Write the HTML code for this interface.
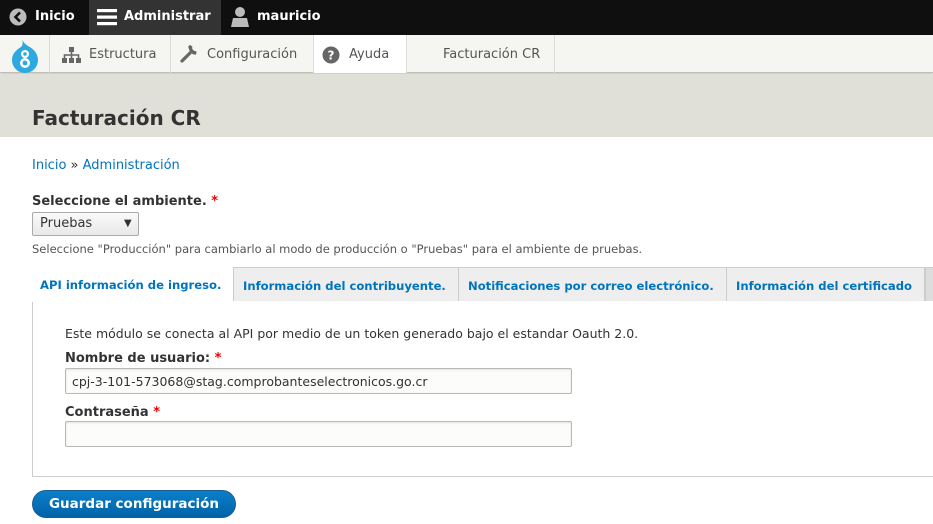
<!DOCTYPE html>
<html><head><meta charset="utf-8"><style>
*{box-sizing:border-box;margin:0;padding:0}
body{width:933px;height:524px;overflow:hidden;background:#fff;font-family:"DejaVu Sans","Liberation Sans",sans-serif;color:#333;position:relative;font-size:12px}
.a{position:absolute;white-space:nowrap}
.top{left:0;top:0;width:933px;height:35px;background:#0f0f0f}
.tw{color:#fff;font-weight:bold;font-size:13px;top:9px}
.bar{left:0;top:35px;width:933px;height:38px;background:#f5f5f2;border-bottom:1px solid #bfbfba;box-shadow:0 2px 2px rgba(0,0,0,.2)}
.sep{top:35px;width:1px;height:38px;background:#dcdcd8}
.bt{top:47px;font-size:13px;color:#555}
.blue{color:#0074bd}
.tab{top:267px;height:34px;background:#eee;border-left:1px solid #ccc;border-top:1px solid #ccc;font-weight:bold;color:#0074bd;font-size:11.6px;padding:11px 0 0 9px;overflow:hidden}
.inp{border:1px solid #b8b8b8;border-radius:2px;background:#fcfcfa;box-shadow:inset 0 1px 2px rgba(0,0,0,.1)}
</style></head><body>
<div class="a top"></div>
<div class="a" style="left:89px;top:0;width:132px;height:35px;background:#333"></div>
<svg class="a" style="left:9px;top:8px" width="18" height="18"><circle cx="9" cy="9" r="8.5" fill="#bbb"/><path d="M11 4.5 6.5 9 11 13.5" stroke="#0f0f0f" stroke-width="2.6" fill="none"/></svg>
<div class="a tw" style="left:35px">Inicio</div>
<svg class="a" style="left:97px;top:8px" width="20" height="18"><rect y="1" width="20" height="3.2" fill="#fff"/><rect y="7.5" width="20" height="3.2" fill="#fff"/><rect y="14" width="20" height="3.2" fill="#fff"/></svg>
<div class="a tw" style="left:124px">Administrar</div>
<svg class="a" style="left:229px;top:5px" width="22" height="24"><circle cx="11" cy="7" r="5" fill="#bbb"/><path d="M4 13h14l2 9H2z" fill="#bbb"/></svg>
<div class="a tw" style="left:257px">mauricio</div>
<div class="a bar"></div>
<div class="a" style="left:314px;top:35px;width:92px;height:38px;background:#fff"></div>
<div class="a sep" style="left:49px"></div><div class="a sep" style="left:170px"></div><div class="a sep" style="left:313px"></div><div class="a sep" style="left:406px"></div><div class="a sep" style="left:554px"></div>
<svg class="a" style="left:8px;top:37px" width="34" height="36"><path d="M14 2c1 3 3 5 6 7 6 3 10 8 10 14a13 13 0 0 1-26 0c0-6 4-10 9-13 2-2 2-5 1-8z" fill="#2ba9e0"/><circle cx="17" cy="17" r="4" fill="#fff"/><circle cx="17" cy="26" r="5" fill="#fff"/><circle cx="17" cy="17" r="1.8" fill="#2ba9e0"/><circle cx="17" cy="26" r="2.4" fill="#2ba9e0"/></svg>
<svg class="a" style="left:61px;top:46px" width="20" height="18"><rect x="8" y="1" width="5" height="5" fill="#666"/><rect x="1" y="12" width="5" height="5" fill="#666"/><rect x="8" y="12" width="5" height="5" fill="#666"/><rect x="15" y="12" width="5" height="5" fill="#666"/><path d="M10.5 6v6M3.5 12V9h14v3" stroke="#666" stroke-width="1.6" fill="none"/></svg>
<div class="a bt" style="left:89px">Estructura</div>
<svg class="a" style="left:179px;top:44px" width="20" height="20"><path d="M3 17 11 9M12 2a5 5 0 0 0 5 7l-3-1-2-2-1-3z" stroke="#666" stroke-width="3.2" fill="#666" stroke-linecap="round"/></svg>
<div class="a bt" style="left:207px">Configuración</div>
<svg class="a" style="left:322px;top:46px" width="18" height="18"><circle cx="9" cy="9" r="8.5" fill="#666"/><text x="9" y="13.5" font-size="12" font-weight="bold" fill="#fff" text-anchor="middle" font-family="DejaVu Sans">?</text></svg>
<div class="a bt" style="left:349px">Ayuda</div>
<div class="a bt" style="left:443px">Facturación CR</div>
<div class="a" style="left:0;top:74px;width:933px;height:63px;background:#e0e0d8"></div>
<div class="a" style="left:32px;top:106px;font-size:20px;font-weight:bold;color:#333">Facturación CR</div>
<div class="a" style="left:32px;top:158px;font-size:13px"><span class="blue">Inicio</span> » <span class="blue">Administración</span></div>
<div class="a" style="left:32px;top:194px;font-size:13px;font-weight:bold">Seleccione el ambiente. <span style="color:#e00">*</span></div>
<div class="a" style="left:32px;top:212px;width:107px;height:24px;border:1px solid #aaa;border-radius:2px;background:linear-gradient(#fafafa,#e8e8e8);font-size:13px;padding:3px 0 0 7px">Pruebas<span style="position:absolute;left:91px;top:5px;font-size:10px">▼</span></div>
<div class="a" style="left:32px;top:242px;font-size:11.5px;color:#555">Seleccione "Producción" para cambiarlo al modo de producción o "Pruebas" para el ambiente de pruebas.</div>
<div class="a" style="left:32px;top:267px;width:910px;height:210px;border:1px solid #ccc"></div>
<div class="a tab" style="left:233px;width:225px">Información del contribuyente.</div>
<div class="a tab" style="left:458px;width:268px">Notificaciones por correo electrónico.</div>
<div class="a tab" style="left:726px;width:199px;border-right:1px solid #ccc">Información del certificado</div>
<div class="a tab" style="left:925px;width:20px;background:#ddd"></div>
<div class="a tab" style="left:32px;width:201px;background:#fff;border-left:0;padding-left:8px;height:35px;border-top:0">API información de ingreso.</div>
<div class="a" style="left:65px;top:326px;font-size:12.5px">Este módulo se conecta al API por medio de un token generado bajo el estandar Oauth 2.0.</div>
<div class="a" style="left:65px;top:351px;font-size:13px;font-weight:bold">Nombre de usuario: <span style="color:#e00">*</span></div>
<div class="a inp" style="left:65px;top:368px;width:507px;height:26px;font-size:12.5px;padding:5px 0 0 6px">cpj-3-101-573068@stag.comprobanteselectronicos.go.cr</div>
<div class="a" style="left:65px;top:405px;font-size:13px;font-weight:bold">Contraseña <span style="color:#e00">*</span></div>
<div class="a inp" style="left:65px;top:421px;width:507px;height:26px"></div>
<div class="a" style="left:32px;top:490px;width:204px;height:28px;border-radius:14px;background:linear-gradient(#0a7fc9,#0063a8);border:1px solid #1e5c90;color:#fff;font-weight:bold;font-size:13.5px;text-align:center;padding-top:5px">Guardar configuración</div>
</body></html>
